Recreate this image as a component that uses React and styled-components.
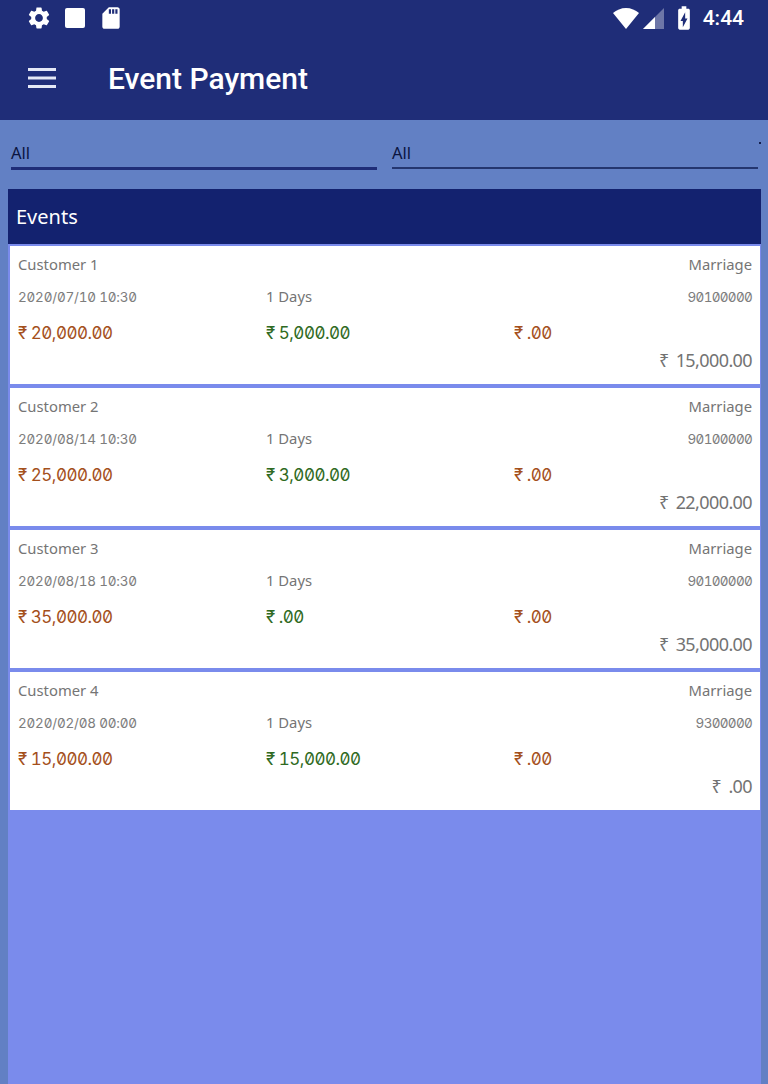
import React from 'react';
import styled, { createGlobalStyle } from 'styled-components';
import { MdSettings, MdSdCard, MdBatteryChargingFull } from 'react-icons/md';

const events = [
  { name: 'Customer 1', date: '2020/07/10 10:30', phone: '90100000', total: '20,000.00', paid: '5,000.00', balance: '15,000.00' },
  { name: 'Customer 2', date: '2020/08/14 10:30', phone: '90100000', total: '25,000.00', paid: '3,000.00', balance: '22,000.00' },
  { name: 'Customer 3', date: '2020/08/18 10:30', phone: '90100000', total: '35,000.00', paid: '.00', balance: '35,000.00' },
  { name: 'Customer 4', date: '2020/02/08 00:00', phone: '9300000', total: '15,000.00', paid: '15,000.00', balance: '.00' },
];

const App = () => (
  <Screen>
    <GlobalStyle />
    <TopBar>
      <StatusBar>
        <StatusIcons>
          <MdSettings size={26} />
          <BlankIcon />
          <MdSdCard size={26} />
        </StatusIcons>
        <StatusRight>
          <svg width="26" height="21" viewBox="0 0 26 21">
            <path d="M0 5C3.500 2 8 0 13 0s9.500 2 13 5L13 21z" fill="#fff" />
          </svg>
          <SignalIcon width="21" height="21" viewBox="0 0 21 21">
            <path d="M21 0v21H0z" fill="#fff" fillOpacity="0.35" />
            <path d="M12 9v12H0z" fill="#fff" />
          </SignalIcon>
          <BatteryIcon><MdBatteryChargingFull size={28} /></BatteryIcon>
          <Clock>4:44</Clock>
        </StatusRight>
      </StatusBar>
      <ActionBar>
        <svg width="28" height="20" viewBox="0 0 28 20">
          <rect y="0" width="28" height="3" fill="#e4e8f6" />
          <rect y="8.500" width="28" height="3" fill="#e4e8f6" />
          <rect y="17" width="28" height="3" fill="#e4e8f6" />
        </svg>
        <Title>Event Payment</Title>
      </ActionBar>
    </TopBar>
    <Filters>
      <Filter $thick>All</Filter>
      <Filter>All<Dot /></Filter>
    </Filters>
    <Panel>
      <PanelHeader>Events</PanelHeader>
      <CardList>
        {events.map(event => (
          <Card key={event.name}>
            <Row $height={32}>
              <Name>{event.name}</Name>
              <Name>Marriage</Name>
            </Row>
            <Row $height={32}>
              <Column><Numeric $spacing={-0.2}>{event.date}</Numeric></Column>
              <Column><Name>1 Days</Name></Column>
              <RightColumn><Numeric $spacing={-0.7}>{event.phone}</Numeric></RightColumn>
            </Row>
            <AmountRow>
              <Column><Amount $color="#a4501c">₹ {event.total}</Amount></Column>
              <Column><Amount $color="#2f6a22">₹ {event.paid}</Amount></Column>
              <RightColumn><Amount $color="#a4501c">₹ .00</Amount></RightColumn>
            </AmountRow>
            <BalanceRow>
              <Balance><span>₹</span> {event.balance}</Balance>
            </BalanceRow>
          </Card>
        ))}
      </CardList>
    </Panel>
  </Screen>
);

const GlobalStyle = createGlobalStyle`
  html, body {
    margin: 0;
    padding: 0;
    height: 1084px;
    overflow: hidden;
  }
`;

const Screen = styled.div`
  width: 768px;
  height: 1084px;
  display: flex;
  flex-direction: column;
  background-color: #6280c4;
  font-family: "Noto Sans", sans-serif;
  overflow: hidden;
`;

const TopBar = styled.div`
  height: 120px;
  flex-shrink: 0;
  background-color: #1f2d78;
  color: #fff;
`;

const StatusBar = styled.div`
  height: 36px;
  display: flex;
  align-items: center;
  justify-content: space-between;
  padding: 0 24px 0 26px;
`;

const StatusIcons = styled.div`
  display: flex;
  align-items: center;
  gap: 13px;
`;

const BlankIcon = styled.div`
  width: 20px;
  height: 20px;
  border-radius: 2px;
  background-color: #fff;
`;

const StatusRight = styled.div`
  display: flex;
  align-items: center;
`;

const SignalIcon = styled.svg`
  margin-left: 4px;
`;

const BatteryIcon = styled.div`
  display: flex;
  margin: 0 5px 0 6px;
`;

const Clock = styled.span`
  font-family: Roboto, sans-serif;
  font-size: 21px;
  font-weight: 500;
`;

const ActionBar = styled.div`
  height: 84px;
  display: flex;
  align-items: center;
  gap: 52px;
  padding: 0 28px;
  box-sizing: border-box;
`;

const Title = styled.h1`
  margin: 0;
  font-family: Roboto, sans-serif;
  font-size: 30px;
  font-weight: 500;
`;

const Filters = styled.div`
  height: 69px;
  flex-shrink: 0;
  display: grid;
  grid-template-columns: 366px 366px;
  gap: 15px;
  padding: 0 10px 0 11px;
  box-sizing: border-box;
`;

const Filter = styled.div`
  position: relative;
  height: ${props => (props.$thick ? '50px' : '49px')};
  display: flex;
  align-items: flex-end;
  padding-bottom: 3px;
  box-sizing: border-box;
  border-bottom: ${props => (props.$thick ? '3px solid #1f2d78' : '2px solid #24366f')};
  color: #0b1440;
  font-size: 16.500px;
  line-height: 22px;
`;

const Dot = styled.span`
  position: absolute;
  right: -3px;
  top: 22px;
  width: 2px;
  height: 2px;
  background-color: #14204f;
`;

const Panel = styled.div`
  flex: 1;
  margin: 0 7px 0 8px;
  background-color: #7a8bec;
`;

const PanelHeader = styled.div`
  height: 55px;
  display: flex;
  align-items: center;
  padding-left: 8px;
  background-color: #13226f;
  color: #fff;
  font-size: 20px;
`;

const CardList = styled.div`
  display: flex;
  flex-direction: column;
  gap: 4px;
  padding: 2px 1px 0 2px;
`;

const Card = styled.div`
  height: 138px;
  padding: 2px 8px 0;
  box-sizing: border-box;
  background-color: #fff;
`;

const Row = styled.div`
  height: ${props => props.$height}px;
  display: flex;
  align-items: center;
  justify-content: space-between;
`;

const AmountRow = styled.div`
  height: 40px;
  padding-top: 2px;
  box-sizing: border-box;
  display: flex;
  align-items: center;
`;

const Column = styled.div`
  width: 248px;
  flex-shrink: 0;
`;

const RightColumn = styled.div`
  flex: 1;
  text-align: right;
  white-space: nowrap;
`;

const Name = styled.span`
  color: #757575;
  font-size: 14.800px;
`;

const Numeric = styled.span`
  display: inline-block;
  padding-bottom: 2px;
  color: #7d7d7d;
  font-family: Inter, sans-serif;
  font-feature-settings: "zero" 1, "tnum" 1;
  font-size: 13.500px;
  letter-spacing: ${props => props.$spacing}px;
`;

const Amount = styled.span`
  display: inline-block;
  width: 100%;
  text-align: left;
  color: ${props => props.$color};
  font-family: Inter, sans-serif;
  font-feature-settings: "zero" 1, "tnum" 1;
  font-size: 17px;
  letter-spacing: -0.5px;
`;

const BalanceRow = styled.div`
  display: flex;
  justify-content: flex-end;
  height: 16px;
  align-items: center;
`;

const Balance = styled.span`
  color: #737373;
  font-size: 18px;
  letter-spacing: -0.6px;

  span {
    margin-right: 3px;
  }
`;

export default App;
